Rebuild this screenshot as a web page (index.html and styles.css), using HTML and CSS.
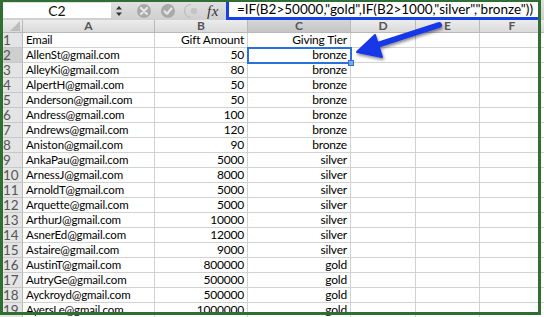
FILE: index.html
```html
<!DOCTYPE html>
<html>
<head>
<meta charset="utf-8">
<link rel="stylesheet" href="styles.css">
</head>
<body>
<div class="app">
  <div class="toolbar">
    <div class="namebox">C2</div>
    <div class="stepper">
      <svg width="8" height="14" viewBox="0 0 8 14"><path d="M4 2 L7 5.5 L1 5.5 Z M4 12 L7 8.5 L1 8.5 Z" fill="#333"/></svg>
    </div>
    <div class="buttons">
      <svg class="btn" width="16" height="16" viewBox="0 0 16 16"><circle cx="8" cy="8" r="7" fill="#a9a9a9"/><path d="M5 5 L11 11 M11 5 L5 11" stroke="#e6e6e6" stroke-width="2.2" stroke-linecap="round"/></svg>
      <svg class="btn" width="16" height="16" viewBox="0 0 16 16"><circle cx="8" cy="8" r="7" fill="#a9a9a9"/><path d="M4.5 8.2 L7 10.8 L11.5 5.5" stroke="#e6e6e6" stroke-width="2.2" fill="none" stroke-linecap="round" stroke-linejoin="round"/></svg>
      <svg class="btn" width="16" height="16" viewBox="0 0 16 16"><path d="M7 1.5 A6.5 6.5 0 0 0 7 14.5" stroke="#bdbdbd" stroke-width="1.2" fill="none"/><circle cx="10" cy="8" r="3.2" fill="#c4c4c4"/></svg>
      <span class="fx">fx</span>
    </div>
    <div class="formula">=IF(B2&gt;50000,"gold",IF(B2&gt;1000,"silver","bronze"))</div>
  </div>
  <div class="sheet">
    <div class="corner"><svg width="10" height="10" viewBox="0 0 10 10"><path d="M10 0 L10 10 L0 10 Z" fill="#bdbdbd"/></svg></div>
    <div class="ch">A</div><div class="ch">B</div><div class="ch sel">C</div><div class="ch">D</div><div class="ch">E</div><div class="ch last">F</div>

    <div class="rh">1</div><div class="c">Email</div><div class="c r">Gift Amount</div><div class="c r">Giving Tier</div><div class="c"></div><div class="c"></div><div class="c last"></div>
    <div class="rh sel">2</div><div class="c">AllenSt@gmail.com</div><div class="c r">50</div><div class="c r active">bronze<span class="handle"></span></div><div class="c"></div><div class="c"></div><div class="c last"></div>
    <div class="rh">3</div><div class="c">AlleyKi@gmail.com</div><div class="c r">80</div><div class="c r">bronze</div><div class="c"></div><div class="c"></div><div class="c last"></div>
    <div class="rh">4</div><div class="c">AlpertH@gmail.com</div><div class="c r">50</div><div class="c r">bronze</div><div class="c"></div><div class="c"></div><div class="c last"></div>
    <div class="rh">5</div><div class="c">Anderson@gmail.com</div><div class="c r">50</div><div class="c r">bronze</div><div class="c"></div><div class="c"></div><div class="c last"></div>
    <div class="rh">6</div><div class="c">Andress@gmail.com</div><div class="c r">100</div><div class="c r">bronze</div><div class="c"></div><div class="c"></div><div class="c last"></div>
    <div class="rh">7</div><div class="c">Andrews@gmail.com</div><div class="c r">120</div><div class="c r">bronze</div><div class="c"></div><div class="c"></div><div class="c last"></div>
    <div class="rh">8</div><div class="c">Aniston@gmail.com</div><div class="c r">90</div><div class="c r">bronze</div><div class="c"></div><div class="c"></div><div class="c last"></div>
    <div class="rh">9</div><div class="c">AnkaPau@gmail.com</div><div class="c r">5000</div><div class="c r">silver</div><div class="c"></div><div class="c"></div><div class="c last"></div>
    <div class="rh">10</div><div class="c">ArnessJ@gmail.com</div><div class="c r">8000</div><div class="c r">silver</div><div class="c"></div><div class="c"></div><div class="c last"></div>
    <div class="rh">11</div><div class="c">ArnoldT@gmail.com</div><div class="c r">5000</div><div class="c r">silver</div><div class="c"></div><div class="c"></div><div class="c last"></div>
    <div class="rh">12</div><div class="c">Arquette@gmail.com</div><div class="c r">5000</div><div class="c r">silver</div><div class="c"></div><div class="c"></div><div class="c last"></div>
    <div class="rh">13</div><div class="c">ArthurJ@gmail.com</div><div class="c r">10000</div><div class="c r">silver</div><div class="c"></div><div class="c"></div><div class="c last"></div>
    <div class="rh">14</div><div class="c">AsnerEd@gmail.com</div><div class="c r">12000</div><div class="c r">silver</div><div class="c"></div><div class="c"></div><div class="c last"></div>
    <div class="rh">15</div><div class="c">Astaire@gmail.com</div><div class="c r">9000</div><div class="c r">silver</div><div class="c"></div><div class="c"></div><div class="c last"></div>
    <div class="rh">16</div><div class="c">AustinT@gmail.com</div><div class="c r">800000</div><div class="c r">gold</div><div class="c"></div><div class="c"></div><div class="c last"></div>
    <div class="rh">17</div><div class="c">AutryGe@gmail.com</div><div class="c r">500000</div><div class="c r">gold</div><div class="c"></div><div class="c"></div><div class="c last"></div>
    <div class="rh">18</div><div class="c">Ayckroyd@gmail.com</div><div class="c r">500000</div><div class="c r">gold</div><div class="c"></div><div class="c"></div><div class="c last"></div>
    <div class="rh">19</div><div class="c">AyersLe@gmail.com</div><div class="c r">1000000</div><div class="c r">gold</div><div class="c"></div><div class="c"></div><div class="c last"></div>
  </div>

  <svg class="arrow" width="544" height="317" viewBox="0 0 544 317">
    <g filter="url(#sh)">
      <path d="M439 25 L374 46" stroke="#1737e6" stroke-width="6" stroke-linecap="round"/>
      <path d="M357 52 L375 35 L382 57 Z" fill="#1737e6" stroke="#1737e6" stroke-width="2" stroke-linejoin="round"/>
    </g>
    <defs>
      <filter id="sh" x="-20%" y="-50%" width="140%" height="200%">
        <feDropShadow dx="1" dy="2" stdDeviation="1.5" flood-color="#000" flood-opacity="0.45"/>
      </filter>
    </defs>
  </svg>
  <div class="frame"></div>
</div>
</body>
</html>
```

FILE: styles.css
```css
html, body {
  margin: 0;
  padding: 0;
  background: #fff;
  overflow: hidden;
}
.app {
  position: relative;
  width: 544px;
  height: 317px;
  overflow: hidden;
  font-family: "Lato", "Liberation Sans", sans-serif;
}
.toolbar {
  height: 20px;
  display: flex;
  align-items: stretch;
  background: linear-gradient(#e2e2e2, #cfcfcf);
  box-sizing: border-box;
}
.namebox {
  width: 108px;
  margin: 3px 0 2px 3px;
  background: #fff;
  font-size: 14px;
  line-height: 15px;
  text-align: center;
  color: #111;
}
.stepper {
  width: 16px;
  display: flex;
  align-items: center;
  justify-content: center;
  margin-top: 2px;
}
.buttons {
  width: 99px;
  display: flex;
  align-items: center;
  padding: 2px 0 0 9px;
  gap: 8px;
  box-sizing: border-box;
}
.btn { flex: none; }
.fx {
  font-family: "Liberation Serif", serif;
  font-style: italic;
  font-size: 15px;
  color: #333;
  margin-left: -1px;
  letter-spacing: 0.5px;
}
.formula {
  flex: 1;
  margin-right: 4px;
  border: 3px solid #1640e8;
  border-top-width: 2px;
  border-right-width: 1px;
  background: #fff;
  font-size: 13.5px;
  line-height: 14px;
  padding-left: 8px;
  color: #000;
  white-space: nowrap;
  overflow: hidden;
}
.sheet {
  display: grid;
  grid-template-columns: 23px 132px 93px 103px 65px 64px 1fr;
  grid-template-rows: 13px;
  grid-auto-rows: 15px;
  font-size: 12px;
  color: #000;
}
.corner, .ch, .rh {
  background: linear-gradient(#ececec, #dadada);
  border-right: 1px solid #b9b9b9;
  border-bottom: 1px solid #b9b9b9;
  box-sizing: border-box;
}
.corner {
  display: flex;
  align-items: flex-end;
  justify-content: flex-end;
  padding: 0 2px 1px 0;
}
.ch {
  text-align: center;
  font-weight: bold;
  font-size: 12px;
  line-height: 12px;
  color: #555;
}
.ch.sel {
  background: linear-gradient(#d6d6d6, #c4c4c4);
}
.rh {
  background: #e4e4e4;
  border-bottom-color: #c8c8c8;
  font-size: 13.5px;
  line-height: 14px;
  padding-left: 3px;
  color: #555;
}
.rh.sel { background: #cfcfcf; }
.c {
  border-right: 1px solid #d2d2d2;
  border-bottom: 1px solid #d2d2d2;
  box-sizing: border-box;
  line-height: 14px;
  padding: 0 3px;
  white-space: nowrap;
  overflow: hidden;
  letter-spacing: -0.2px;
}
.c:nth-child(7n+2) { font-size: 11.5px; letter-spacing: -0.15px; }
.c.r { text-align: right; }
.c.last, .ch.last { border-right: none; }
.c.active {
  position: relative;
  overflow: visible;
  outline: 2px solid #2a72d9;
  outline-offset: -1px;
}
.handle {
  position: absolute;
  right: -4px;
  bottom: -4px;
  width: 4px;
  height: 4px;
  background: #7fa6e6;
  border: 1px solid #2a72d9;
}
.arrow {
  position: absolute;
  left: 0;
  top: 0;
  pointer-events: none;
}
.frame {
  position: absolute;
  left: 0;
  top: 0;
  width: 541px;
  height: 315px;
  border: 3px solid #2f6f34;
  border-top-width: 2px;
  box-sizing: border-box;
  pointer-events: none;
}
```
